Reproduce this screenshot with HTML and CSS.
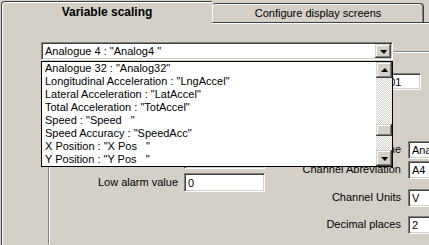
FILE: index.html
```html
<!DOCTYPE html>
<html lang="en">
<head>
  <meta charset="UTF-8" />
  <title>Variable scaling</title>
  <link rel="stylesheet" href="styles.css">
</head>
<body>
  <div class="window">
    <div class="tabs">
      <div class="tab tab-active">Variable scaling</div>
      <div class="tab">Configure display screens</div>
    </div>

    <div class="page">
      <div class="combo-row">
        <div class="combo">
          <span class="combo-text">Analogue 4 : "Analog4 "</span>
          <span class="btn drop-btn"><i class="arrow-down"></i></span>
        </div>
        <div class="group-line"></div>
      </div>

      <div class="content">
        <div class="side"></div>

        <div class="mid">
          <label class="field-label">High alarm value</label>
          <div class="edit">100</div>
          <label class="field-label">Low alarm value</label>
          <div class="edit">0</div>
        </div>

        <div class="right">
          <div class="edit edit-small">0.01</div>
          <div class="row row-name">
            <label class="field-label">Channel Name</label>
            <div class="edit edit-wide">Analog4</div>
          </div>
          <div class="row row-abbr">
            <label class="field-label">Channel Abreviation</label>
            <div class="edit edit-wide">A4</div>
          </div>
          <div class="row row-units">
            <label class="field-label">Channel Units</label>
            <div class="edit edit-wide">V</div>
          </div>
          <div class="row row-dec">
            <label class="field-label">Decimal places</label>
            <div class="edit edit-wide">2</div>
          </div>
        </div>
      </div>
    </div>

    <!-- open drop-down of the combo, lies over the form -->
    <div class="droplist">
      <ul class="items">
        <li>Analogue 32 : "Analog32"</li>
        <li>Longitudinal Acceleration : "LngAccel"</li>
        <li>Lateral Acceleration : "LatAccel"</li>
        <li>Total Acceleration : "TotAccel"</li>
        <li>Speed : "Speed   "</li>
        <li>Speed Accuracy : "SpeedAcc"</li>
        <li>X Position : "X Pos   "</li>
        <li>Y Position : "Y Pos   "</li>
      </ul>
      <div class="scrollbar">
        <span class="btn scroll-btn"><i class="arrow-up"></i></span>
        <div class="track">
          <span class="btn thumb"></span>
        </div>
        <span class="btn scroll-btn"><i class="arrow-down"></i></span>
      </div>
    </div>
  </div>
</body>
</html>
```

FILE: styles.css
```css
:root {
  --face: #d4d0c8;
  --shadow: #808080;
  --dark: #404040;
  --light: #ffffff;
}

* {
  box-sizing: border-box;
}

body {
  margin: 0;
  width: 429px;
  height: 245px;
  overflow: hidden;
  background: var(--face);
  color: #000;
  font-family: "Liberation Sans", Arial, sans-serif;
  font-size: 11px;
}

.window {
  position: relative;
  height: 245px;
  padding-left: 1px;
}

/* tabs */
.tabs {
  display: flex;
  height: 22px;
  position: relative;
  z-index: 1;
}

.tab {
  width: 212px;
  height: 19px;
  margin-top: 3px;
  line-height: 18px;
  text-align: center;
  border-top: 1px solid var(--dark);
  border-left: 1px solid var(--light);
  border-right: 1px solid var(--dark);
  border-radius: 4px 4px 0 0;
  box-shadow: inset -1px 0 0 var(--shadow), inset 0 1px 0 var(--light);
  background: var(--face);
}

.tab-active {
  width: 211px;
  height: 24px;
  margin-top: 1px;
  line-height: 21px;
  font-size: 12px;
  font-weight: bold;
  border-left: 1px solid var(--dark);
  border-right: none;
  border-radius: 4px 0 0 0;
  box-shadow: inset 1px 1px 0 var(--light);
}

/* page */
.page {
  height: 223px;
  border-top: 1px solid var(--dark);
  border-left: 1px solid var(--dark);
  box-shadow: inset 1px 1px 0 var(--light);
}

.combo-row {
  display: flex;
  padding-top: 19px;
  padding-left: 39px;
}

.combo {
  width: 352px;
  height: 18px;
  display: flex;
  align-items: center;
  justify-content: space-between;
  padding: 0 1px 0 3px;
  background: #fff;
  border: 1px solid;
  border-color: var(--shadow) var(--light) var(--light) var(--shadow);
  box-shadow: inset 1px 1px 0 var(--dark), inset -1px -1px 0 var(--face);
  white-space: pre;
}

.group-line {
  flex: 1;
  height: 2px;
  margin: 9px 0 0 1px;
  border-top: 1px solid var(--shadow);
  border-bottom: 1px solid var(--light);
}

.btn {
  display: flex;
  align-items: center;
  justify-content: center;
  background: var(--face);
  box-shadow: inset -1px -1px 0 var(--dark), inset 1px 1px 0 var(--face),
    inset -2px -2px 0 var(--shadow), inset 2px 2px 0 var(--light);
}

.drop-btn {
  width: 16px;
  height: 14px;
}

.arrow-down,
.arrow-up {
  width: 0;
  height: 0;
  border-left: 4px solid transparent;
  border-right: 3px solid transparent;
}

.arrow-down {
  border-top: 4px solid #000;
  margin-top: 1px;
}

.arrow-up {
  border-bottom: 4px solid #000;
}

/* form area */
.content {
  display: flex;
  height: 184px;
}

.side {
  width: 48px;
  border-right: 1px solid var(--light);
  box-shadow: inset -1px 0 0 var(--shadow);
}

.mid {
  width: 215px;
  display: grid;
  grid-template-columns: 1fr 81px;
  grid-auto-rows: 19px;
  column-gap: 6px;
  row-gap: 4px;
  padding-top: 90px;
}

.field-label {
  display: flex;
  align-items: center;
  justify-content: flex-end;
  white-space: nowrap;
  padding-bottom: 2px;
}

.edit {
  height: 19px;
  padding: 3px 0 0 3px;
  background: #fff;
  border: 1px solid;
  border-color: var(--shadow) var(--light) var(--light) var(--shadow);
  box-shadow: inset 1px 1px 0 var(--dark), inset -1px -1px 0 var(--face);
  white-space: pre;
  overflow: hidden;
}

.right {
  flex: 1;
  min-width: 0;
}

.edit-small {
  width: 45px;
  height: 17px;
  margin: 13px 0 0 111px;
  padding-top: 2px;
}

.row {
  display: grid;
  grid-template-columns: 136px 60px;
  column-gap: 7px;
  height: 18px;
}

.row .edit {
  height: 18px;
  padding-top: 2px;
}

.row-name { margin-top: 51px; }
.row-abbr { margin-top: 2px; }
.row-units { margin-top: 10px; }
.row-dec { margin-top: 9px; }

/* open list */
.droplist {
  position: absolute;
  left: 41px;
  top: 61px;
  z-index: 2;
  width: 352px;
  height: 106px;
  display: flex;
  background: #fff;
  border: 1px solid #000;
}

.items {
  flex: 1;
  margin: 0;
  padding: 0;
  list-style: none;
}

.items li {
  height: 13px;
  line-height: 13px;
  padding-left: 3px;
  white-space: pre;
}

.scrollbar {
  width: 16px;
  display: flex;
  flex-direction: column;
}

.scroll-btn {
  height: 16px;
}

.track {
  flex: 1;
  background-color: #fff;
  background-image: repeating-conic-gradient(var(--face) 0 25%, #fff 0 50%);
  background-size: 2px 2px;
}

.thumb {
  height: 12px;
  margin-top: 46px;
}
```
